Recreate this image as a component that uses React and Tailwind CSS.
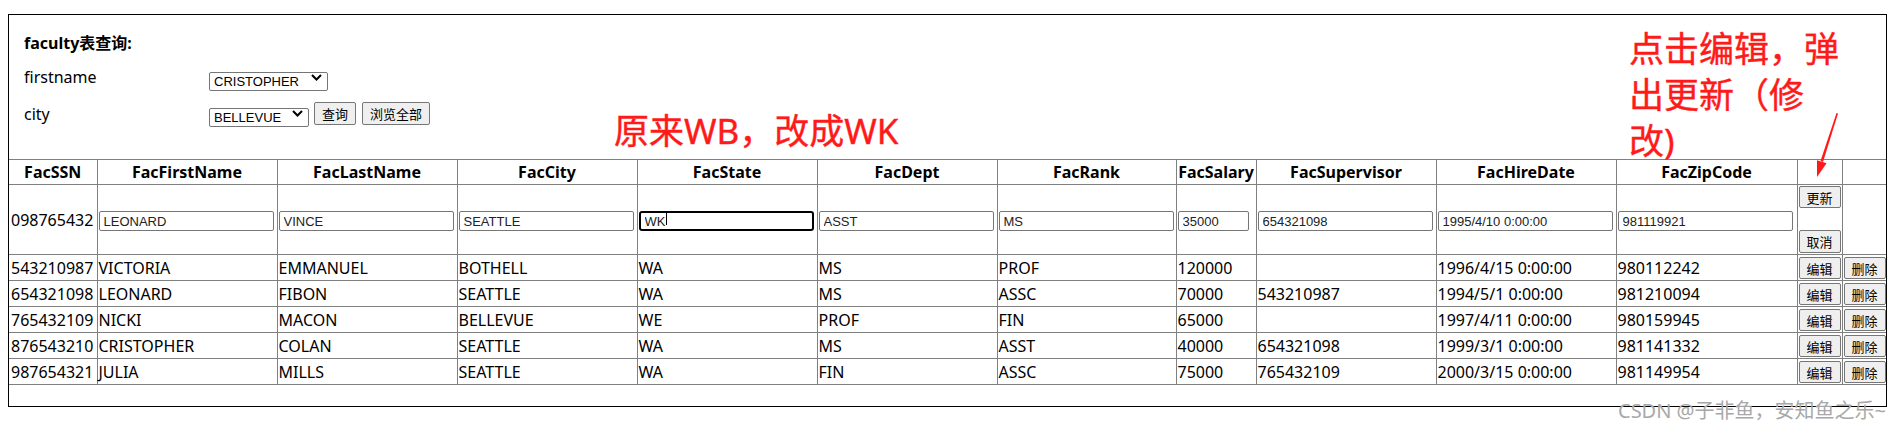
import React from 'react'

const headers = ['FacSSN', 'FacFirstName', 'FacLastName', 'FacCity', 'FacState', 'FacDept', 'FacRank', 'FacSalary', 'FacSupervisor', 'FacHireDate', 'FacZipCode']

const editRow = ['LEONARD', 'VINCE', 'SEATTLE', 'WK', 'ASST', 'MS', '35000', '654321098', '1995/4/10 0:00:00', '981119921']

const rows = [
  ['543210987', 'VICTORIA', 'EMMANUEL', 'BOTHELL', 'WA', 'MS', 'PROF', '120000', '', '1996/4/15 0:00:00', '980112242'],
  ['654321098', 'LEONARD', 'FIBON', 'SEATTLE', 'WA', 'MS', 'ASSC', '70000', '543210987', '1994/5/1 0:00:00', '981210094'],
  ['765432109', 'NICKI', 'MACON', 'BELLEVUE', 'WE', 'PROF', 'FIN', '65000', '', '1997/4/11 0:00:00', '980159945'],
  ['876543210', 'CRISTOPHER', 'COLAN', 'SEATTLE', 'WA', 'MS', 'ASST', '40000', '654321098', '1999/3/1 0:00:00', '981141332'],
  ['987654321', 'JULIA', 'MILLS', 'SEATTLE', 'WA', 'FIN', 'ASSC', '75000', '765432109', '2000/3/15 0:00:00', '981149954'],
]

const btn = "h-[22px] w-[42px] bg-[#efefef] border border-[#767676] rounded-[2px] text-[13px] text-black leading-none font-['Noto_Sans_CJK_SC',sans-serif]"
const cell = 'border border-[#808080] px-[1px] py-0 align-middle whitespace-nowrap'
const red = "text-[35px] text-[#ff1a1a] whitespace-nowrap [-webkit-text-stroke:0.4px_#ff1a1a]"

function Select({ value, w }) {
  return (
    <div className={`relative h-[19px] ${w}`}>
      <select
        defaultValue={value}
        className="appearance-none w-full h-full border border-[#767676] rounded-[2px] bg-white pl-[4px] text-[13px] leading-none text-black font-['Liberation_Sans',sans-serif]"
      >
        <option>{value}</option>
      </select>
      <svg className="absolute right-[6px] top-[6px] pointer-events-none" width="11" height="7" viewBox="0 0 11 7">
        <polyline points="1,1 5.5,5.5 10,1" fill="none" stroke="#000" strokeWidth="2" />
      </svg>
    </div>
  )
}

function EditInput({ value, focused, w }) {
  if (focused) {
    return (
      <div className="relative">
        <input
          defaultValue={value}
          className={`${w} h-[20px] border-2 border-black rounded-[3px] pl-[4px] text-[13px] text-[#222] font-['Liberation_Sans',sans-serif] outline-none`}
        />
        <span className="absolute left-[27px] top-[3px] w-[1px] h-[14px] bg-black" />
      </div>
    )
  }
  return (
    <input
      defaultValue={value}
      className={`${w} h-[20px] border border-[#767676] rounded-[2px] pl-[4px] text-[13px] text-[#222] font-['Liberation_Sans',sans-serif] outline-none`}
    />
  )
}

export default function App() {
  return (
    <div className="relative w-[1895px] h-[430px] bg-white text-black font-['Noto_Sans','Noto_Sans_CJK_SC',sans-serif]">
      <div className="px-[8px] pt-[14px]">
        <div className="border border-black">
          {/* query form */}
          <div className="h-[144px] pl-[15px] pt-[17px]">
            <div className="h-[22px] flex items-center text-[16px] font-bold">faculty表查询:</div>
            <div className="mt-[12px] h-[22px] flex items-center">
              <span className="w-[185px] text-[16px]">firstname</span>
              <Select value="CRISTOPHER" w="w-[119px]" />
            </div>
            <div className="mt-[13px] h-[25px] flex items-center">
              <span className="w-[185px] text-[16px]">city</span>
              <Select value="BELLEVUE" w="w-[100px]" />
              <button className={`${btn} ml-[5px] h-[23px]`}>查询</button>
              <button className={`${btn} ml-[6px] h-[23px] w-[68px]`}>浏览全部</button>
            </div>
          </div>

          <table className="w-full table-fixed border-collapse text-[16px]">
            <colgroup>
              <col className="w-[88px]" />
              <col className="w-[180px]" />
              <col className="w-[180px]" />
              <col className="w-[180px]" />
              <col className="w-[180px]" />
              <col className="w-[180px]" />
              <col className="w-[179px]" />
              <col className="w-[80px]" />
              <col className="w-[180px]" />
              <col className="w-[180px]" />
              <col className="w-[181px]" />
              <col className="w-[45px]" />
              <col />
            </colgroup>
            <thead>
              <tr className="h-[24px]">
                {headers.map((h, i) => (
                  <th key={h} className={`${cell} font-bold text-center ${i === 0 ? 'border-l-0' : ''}`}>{h}</th>
                ))}
                <th className={cell}></th>
                <th className={`${cell} border-r-0`}></th>
              </tr>
            </thead>
            <tbody>
              <tr className="h-[70px]">
                <td className={`${cell} border-l-0 pl-[2px]`}>098765432</td>
                {editRow.map((v, i) => (
                  <td key={i} className={`${cell} pl-[1px]`}>
                    <EditInput value={v} focused={i === 3} w={i === 6 ? 'w-[71px]' : 'w-[175px]'} />
                  </td>
                ))}
                <td className={`${cell} align-top`}>
                  <div className="h-[68px] flex flex-col justify-between pt-[1px]">
                    <button className={`${btn} h-[21px]`}>更新</button>
                    <button className={`${btn} h-[23px]`}>取消</button>
                  </div>
                </td>
                <td className={`${cell} border-r-0`}></td>
              </tr>
              {rows.map((r) => (
                <tr key={r[0]} className="h-[26px]">
                  {r.map((v, i) => (
                    <td key={i} className={`${cell} ${i === 0 ? 'border-l-0 pl-[2px]' : ''}`}>{v}</td>
                  ))}
                  <td className={cell}><button className={btn}>编辑</button></td>
                  <td className={`${cell} border-r-0`}><button className={btn}>删除</button></td>
                </tr>
              ))}
            </tbody>
          </table>
          <div className="h-[21px]" />
        </div>
      </div>

      {/* annotations drawn over the screenshot */}
      <div className={`absolute left-[614px] top-[113px] leading-none ${red}`}>原来WB，改成WK</div>
      <div className={`absolute left-[1629px] top-[26px] leading-[46px] ${red}`}>
        <div>点击编辑，弹</div>
        <div>出更新（修</div>
        <div>改)</div>
      </div>
      <svg className="absolute left-[1805px] top-[105px]" width="40" height="80" viewBox="0 0 40 80">
        <polygon points="31.5,8 33,8.5 18,57 15.5,56" fill="#ff1a1a" />
        <polygon points="12,72 21.6,58.2 12,55.2" fill="#ff1a1a" />
      </svg>
      <div className="absolute left-[1618px] top-[401px] text-[20px] leading-[20px] text-[#a8a8a8] whitespace-nowrap">CSDN @子非鱼，安知鱼之乐~</div>
    </div>
  )
}
